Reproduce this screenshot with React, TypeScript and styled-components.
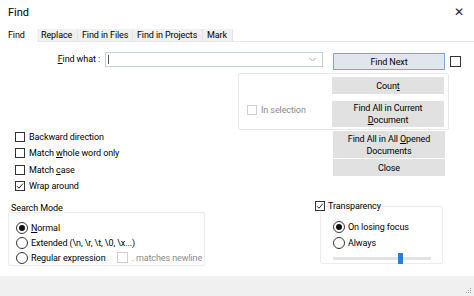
import React from "react";
import styled, { createGlobalStyle } from "styled-components";

const Global = createGlobalStyle`
  html, body {
    margin: 0;
    padding: 0;
    background: #ffffff;
  }
  body {
    font-family: Roboto, "Liberation Sans", sans-serif;
    font-size: 9px;
    letter-spacing: -0.1px;
    color: #000;
    white-space: nowrap;
  }
`;

const Window = styled.div`
  width: 474px;
  height: 296px;
  display: flex;
  flex-direction: column;
  background: #fff;
  overflow: hidden;
`;

const TitleBar = styled.div`
  height: 26px;
  display: flex;
  align-items: center;
  justify-content: space-between;
  padding: 0 10px 2px 8px;
  box-sizing: border-box;
  font-size: 11px;
  letter-spacing: 0;
`;

const CloseX = styled.span`
  font-size: 12px;
  color: #222;
`;

const TabBar = styled.div`
  height: 15px;
  display: flex;
  align-items: flex-end;
`;

const Tab = styled.div<{ $active?: boolean; $w: number }>`
  height: ${(p) => (p.$active ? "15px" : "12px")};
  padding: 0 4px 0 ${(p) => (p.$active ? "8px" : "4px")};
  width: ${(p) => p.$w}px;
  box-sizing: border-box;
  display: flex;
  align-items: center;
  background: ${(p) => (p.$active ? "#fff" : "#f0f0f0")};
  border-right: 1px solid ${(p) => (p.$active ? "#fff" : "#e4e4e4")};
  position: relative;
  z-index: ${(p) => (p.$active ? 1 : 0)};
  margin-bottom: ${(p) => (p.$active ? "-1px" : "0")};
`;

const Body = styled.div`
  flex: 1;
  border-top: 1px solid #e8e8e8;
  display: flex;
  flex-direction: column;
`;

const FindRow = styled.div`
  display: flex;
  align-items: flex-start;
  margin-top: 10px;
  height: 18px;
`;

const Label = styled.div`
  width: 100px;
  text-align: right;
  line-height: 15px;
`;

const Combo = styled.div`
  margin-left: 5px;
  width: 218px;
  height: 15px;
  box-sizing: border-box;
  border: 1px solid #c4cde0;
  display: flex;
  align-items: center;
  justify-content: space-between;
  padding: 0 6px 0 2px;
`;

const Caret = styled.span`
  width: 1px;
  height: 9px;
  background: #555;
`;

const Chevron = styled.svg`
  width: 7px;
  height: 5px;
`;

const Button = styled.div<{ $default?: boolean; $h?: number }>`
  width: 112px;
  height: ${(p) => p.$h ?? 17}px;
  box-sizing: border-box;
  background: ${(p) => (p.$default ? "#e1e5ec" : "#e1e1e1")};
  border: 1px solid ${(p) => (p.$default ? "#7fa5d4" : "#e1e1e1")};
  display: flex;
  align-items: center;
  justify-content: center;
  text-align: center;
  line-height: 12px;
`;

const FindNextWrap = styled.div`
  margin-left: 10px;
  margin-top: 1px;
`;

const Box = styled.span<{ $disabled?: boolean; $size?: number }>`
  width: ${(p) => p.$size ?? 10}px;
  height: ${(p) => p.$size ?? 10}px;
  box-sizing: border-box;
  border: 1px solid ${(p) => (p.$disabled ? "#cfcfcf" : "#333")};
  background: #fff;
  display: inline-flex;
  align-items: center;
  justify-content: center;
  flex: none;
`;

const SideBox = styled(Box)`
  margin-left: 5px;
  margin-top: 4px;
`;

const Tick = () => (
  <svg width="8" height="8" viewBox="0 0 8 8">
    <path d="M1 4.2 L3 6.2 L7 1.6" fill="none" stroke="#222" strokeWidth="1" />
  </svg>
);

const SelectionGroup = styled.div`
  margin-left: 238px;
  margin-top: 3px;
  width: 211px;
  height: 57px;
  box-sizing: border-box;
  border: 1px solid #e8e8e8;
  border-radius: 2px;
  display: flex;
  justify-content: space-between;
  padding: 3px 4px 0 8px;
`;

const ButtonColumn = styled.div<{ $gap: number }>`
  display: flex;
  flex-direction: column;
  gap: ${(p) => p.$gap}px;
`;

const CheckRow = styled.label<{ $disabled?: boolean }>`
  display: flex;
  align-items: center;
  gap: 4px;
  height: 16.3px;
  color: ${(p) => (p.$disabled ? "#8a8a8a" : "#000")};
`;

const InSelection = styled.div`
  margin-top: 25px;
`;

const MiddleRow = styled.div`
  display: flex;
  justify-content: space-between;
  margin-top: 1px;
  padding: 0 29px 0 15px;
`;

const Checks = styled.div`
  display: flex;
  flex-direction: column;
  margin-top: -2px;
`;

const BottomRow = styled.div`
  display: flex;
  justify-content: space-between;
  padding: 0 31px 0 8px;
  margin-top: 9px;
`;

const SearchMode = styled.div`
  width: 197px;
`;

const GroupTitle = styled.div`
  padding-left: 3px;
  line-height: 11px;
  margin-bottom: -2px;
`;

const GroupBox = styled.div<{ $w: number; $h: number }>`
  width: ${(p) => p.$w}px;
  height: ${(p) => p.$h}px;
  box-sizing: border-box;
  border: 1px solid #ececec;
  border-radius: 2px;
  padding: 7px 0 0 7px;
  display: flex;
  flex-direction: column;
`;

const RadioRow = styled.div`
  display: flex;
  align-items: center;
  gap: 3px;
  height: 15.7px;
`;

const Radio = styled.span<{ $on?: boolean }>`
  width: 12px;
  height: 12px;
  box-sizing: border-box;
  border: 1px solid #333;
  border-radius: 50%;
  display: inline-flex;
  align-items: center;
  justify-content: center;
  flex: none;
  &::after {
    content: "";
    width: 6px;
    height: 6px;
    border-radius: 50%;
    background: ${(p) => (p.$on ? "#111" : "transparent")};
  }
`;

const Newline = styled.span`
  display: inline-flex;
  align-items: center;
  gap: 4px;
  margin-left: 8px;
  color: #8a8a8a;
`;

const Transparency = styled.div`
  display: flex;
  flex-direction: column;
  margin-top: -3px;
`;

const TransHead = styled.div`
  display: flex;
  align-items: center;
  gap: 3px;
  height: 12px;
  position: relative;
  z-index: 1;
`;

const TransGroup = styled(GroupBox)`
  margin-left: 5px;
  margin-top: -6px;
  padding: 12px 0 0 12px;
`;

const Slider = styled.div`
  margin-top: 6px;
  width: 98px;
  height: 3px;
  background: #e3e3e3;
  display: flex;
  align-items: center;
`;

const Thumb = styled.span`
  width: 5px;
  height: 11px;
  background: #2f7bd9;
  flex: none;
`;

const StatusBar = styled.div`
  height: 20px;
  background: #f0f0f0;
  display: flex;
  justify-content: flex-end;
  align-items: flex-end;
  padding: 0 2px 2px 0;
  box-sizing: border-box;
`;

const U = styled.span`
  text-decoration: underline;
  text-underline-offset: 1px;
`;

const tabs: [string, number][] = [
  ["Find", 37],
  ["Replace", 41],
  ["Find in Files", 55],
  ["Find in Projects", 70],
  ["Mark", 30],
];

export default function App() {
  return (
    <Window>
      <Global />
      <TitleBar>
        <span>Find</span>
        <CloseX>✕</CloseX>
      </TitleBar>
      <TabBar>
        {tabs.map(([t, w], i) => (
          <Tab key={t} $active={i === 0} $w={w}>
            {t}
          </Tab>
        ))}
      </TabBar>
      <Body>
        <FindRow>
          <Label>
            <U>F</U>ind what :
          </Label>
          <Combo>
            <Caret />
            <Chevron viewBox="0 0 7 5">
              <path d="M0.5 1 L3.5 4 L6.5 1" fill="none" stroke="#9aa0aa" strokeWidth="0.9" />
            </Chevron>
          </Combo>
          <FindNextWrap>
            <Button $default>
              <span>Find Next</span>
            </Button>
          </FindNextWrap>
          <SideBox $size={11} />
        </FindRow>

        <SelectionGroup>
          <InSelection>
            <CheckRow $disabled>
              <Box $disabled />
              <span>In selection</span>
            </CheckRow>
          </InSelection>
          <ButtonColumn $gap={7}>
            <Button>
              <span>
                Coun<U>t</U>
              </span>
            </Button>
            <Button $h={26}>
              <span>
                Find All in Current
                <br />
                <U>D</U>ocument
              </span>
            </Button>
          </ButtonColumn>
        </SelectionGroup>

        <MiddleRow>
          <Checks>
            <CheckRow>
              <Box />
              <span>Backward direction</span>
            </CheckRow>
            <CheckRow>
              <Box />
              <span>
                Match <U>w</U>hole word only
              </span>
            </CheckRow>
            <CheckRow>
              <Box />
              <span>
                Match <U>c</U>ase
              </span>
            </CheckRow>
            <CheckRow>
              <Box>
                <Tick />
              </Box>
              <span>Wrap around</span>
            </CheckRow>
          </Checks>
          <ButtonColumn $gap={1}>
            <Button $h={27}>
              <span>
                Find All in All <U>O</U>pened
                <br />
                Documents
              </span>
            </Button>
            <Button>
              <span>Close</span>
            </Button>
          </ButtonColumn>
        </MiddleRow>

        <BottomRow>
          <SearchMode>
            <GroupTitle>Search Mode</GroupTitle>
            <GroupBox $w={197} $h={54}>
              <RadioRow>
                <Radio $on />
                <span>
                  <U>N</U>ormal
                </span>
              </RadioRow>
              <RadioRow>
                <Radio />
                <span>Extended (\n, \r, \t, \0, \x...)</span>
              </RadioRow>
              <RadioRow>
                <Radio />
                <span>Regular expression</span>
                <Newline>
                  <Box $disabled $size={11} />
                  <span>. matches newline</span>
                </Newline>
              </RadioRow>
            </GroupBox>
          </SearchMode>
          <Transparency>
            <TransHead>
              <Box>
                <Tick />
              </Box>
              <span>Transparency</span>
            </TransHead>
            <TransGroup $w={123} $h={58}>
              <RadioRow>
                <Radio $on />
                <span>On losing focus</span>
              </RadioRow>
              <RadioRow>
                <Radio />
                <span>Always</span>
              </RadioRow>
              <Slider>
                <span style={{ width: 65 }} />
                <Thumb />
              </Slider>
            </TransGroup>
          </Transparency>
        </BottomRow>
      </Body>
      <StatusBar>
        <svg width="8" height="8" viewBox="0 0 8 8">
          <rect x="6" y="2" width="1" height="1" fill="#a0a0a0" />
          <rect x="4" y="4" width="1" height="1" fill="#a0a0a0" />
          <rect x="6" y="4" width="1" height="1" fill="#a0a0a0" />
          <rect x="2" y="6" width="1" height="1" fill="#a0a0a0" />
          <rect x="4" y="6" width="1" height="1" fill="#a0a0a0" />
          <rect x="6" y="6" width="1" height="1" fill="#a0a0a0" />
        </svg>
      </StatusBar>
    </Window>
  );
}
